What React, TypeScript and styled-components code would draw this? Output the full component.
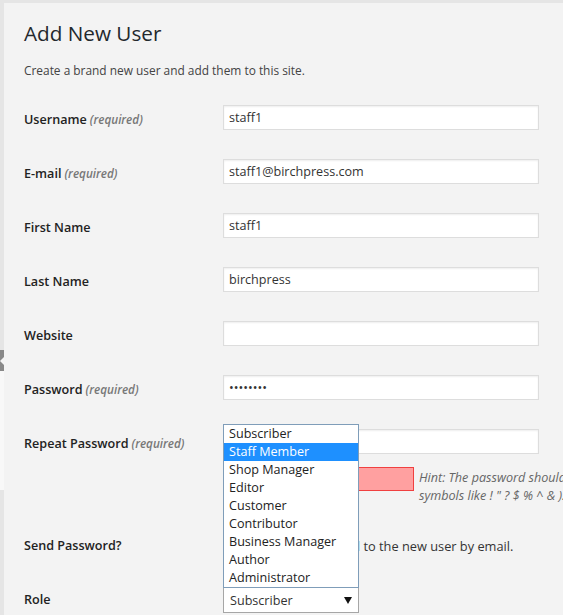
import React from "react";
import styled, { createGlobalStyle } from "styled-components";

const GlobalStyle = createGlobalStyle`
  html, body {
    margin: 0;
    padding: 0;
    overflow: hidden;
    background: #e5e5e5;
  }
  body {
    font-family: "Open Sans", "Liberation Sans", sans-serif;
    color: #222;
  }
  * {
    box-sizing: border-box;
  }
`;

const ROLES = [
  "Subscriber",
  "Staff Member",
  "Shop Manager",
  "Editor",
  "Customer",
  "Contributor",
  "Business Manager",
  "Author",
  "Administrator",
];

interface FieldRow {
  label: string;
  required?: boolean;
  value?: string;
  type?: string;
}

const ROWS: FieldRow[] = [
  { label: "Username", required: true, value: "staff1" },
  { label: "E-mail", required: true, value: "staff1@birchpress.com" },
  { label: "First Name", value: "staff1" },
  { label: "Last Name", value: "birchpress" },
  { label: "Website", value: "" },
  { label: "Password", required: true, value: "staff1pw", type: "password" },
];

interface LabelProps {
  text: string;
  required?: boolean;
  lowered?: boolean;
}

const Label = ({ text, required, lowered }: LabelProps) => (
  <RowLabel lowered={lowered}>
    {text}
    {required && <Required> (required)</Required>}
  </RowLabel>
);

export default function App() {
  return (
    <Page>
      <GlobalStyle />
      <Rail>
        <RailPart tone="gray" size={347} />
        <RailPart tone="dark" size={21} />
        <RailPart tone="light" size={119} />
        <RailPart tone="gray" />
      </Rail>
      <Content>
        <Title>Add New User</Title>
        <Intro>Create a brand new user and add them to this site.</Intro>
        <FormTable>
          {ROWS.map((row) => (
            <Row key={row.label}>
              <Label text={row.label} required={row.required} lowered />
              <Field>
                <TextInput
                  type={row.type || "text"}
                  defaultValue={row.value}
                  readOnly
                />
              </Field>
            </Row>
          ))}
          <Row>
            <Label text="Repeat Password" required lowered />
            <Field>
              <TextInput type="password" defaultValue="" readOnly />
              <StrengthLine>
                <Strength>Very weak</Strength>
                <Hint>
                  Hint: The password should be at least seven characters long. To
                  make it stronger, use upper and lower case letters, numbers, and
                  <br />
                  symbols like ! " ? $ % ^ &amp; ).
                </Hint>
              </StrengthLine>
            </Field>
          </Row>
          <Row>
            <Label text="Send Password?" />
            <Field>
              <CheckLine>
                <Check type="checkbox" />
                Send this password to the new user by email.
              </CheckLine>
            </Field>
          </Row>
          <Row>
            <Label text="Role" />
            <Field>
              <SelectBox>
                <span>Subscriber</span>
                <svg width="8" height="7" viewBox="0 0 8 7">
                  <path d="M0 0h8L4 7z" fill="#111" />
                </svg>
                <ListBox>
                  {ROLES.map((role) => (
                    <Option key={role} selected={role === "Staff Member"}>
                      {role}
                    </Option>
                  ))}
                </ListBox>
              </SelectBox>
            </Field>
          </Row>
        </FormTable>
      </Content>
    </Page>
  );
}

const Page = styled.div`
  display: grid;
  grid-template-columns: 4px 1fr;
  min-height: 100vh;
  padding-top: 3px;
  background: #e5e5e5;
`;

const Rail = styled.div`
  display: flex;
  flex-direction: column;
`;

interface RailPartProps {
  readonly tone: "gray" | "dark" | "light";
  readonly size?: number;
}

const RailPart = styled.div<RailPartProps>`
  position: relative;
  flex: ${(p) => (p.size ? `0 0 ${p.size}px` : "1 1 auto")};
  background: ${(p) =>
    p.tone === "dark" ? "#888" : p.tone === "light" ? "#f8f8f8" : "#e5e5e5"};

  ${(p) =>
    p.tone === "dark" &&
    `
    &::after {
      content: "";
      position: absolute;
      right: 0;
      top: 7px;
      border-top: 4px solid transparent;
      border-bottom: 4px solid transparent;
      border-right: 4px solid #f3f3f3;
    }
  `}
`;

const Content = styled.main`
  background: #f3f3f3;
  padding: 16px 0 0 20px;
  min-width: 0;
`;

const Title = styled.h1`
  margin: 0;
  font-size: 20.7px;
  line-height: 29px;
  font-weight: 400;
  color: #23282d;
`;

const Intro = styled.p`
  margin: 12px 0 0;
  font-size: 11.9px;
  line-height: 20px;
  color: #444;
`;

const FormTable = styled.div`
  margin-top: 10px;
  display: flex;
  flex-direction: column;
`;

const Row = styled.div`
  display: grid;
  grid-template-columns: 199px 1fr;
  align-items: start;
  padding: 15px 0 14px;
`;

interface RowLabelProps {
  readonly lowered?: boolean;
}

const RowLabel = styled.div<RowLabelProps>`
  height: 25px;
  padding-top: ${(p) => (p.lowered ? "2px" : "0")};
  font-size: 12.6px;
  line-height: 25px;
  font-weight: 600;
  color: #222;
`;

const Required = styled.span`
  font-size: 11.7px;
  line-height: 1;
  font-style: italic;
  color: #777;
`;

const Field = styled.div`
  position: relative;
  min-width: 0;
`;

const TextInput = styled.input`
  display: block;
  width: 316px;
  height: 25px;
  margin: 0;
  padding: 0 5px;
  border: 1px solid #ddd;
  box-shadow: inset 0 1px 2px rgba(0, 0, 0, 0.07);
  background: #fff;
  font-family: "Open Sans", "Liberation Sans", sans-serif;
  font-size: 12.6px;
  color: #333;
  outline: none;
`;

const StrengthLine = styled.div`
  display: flex;
  align-items: flex-start;
  height: 37px;
  margin-top: 13px;
`;

const Strength = styled.div`
  flex: 0 0 191px;
  height: 24px;
  border: 1px solid #f04040;
  background: #ffa0a0;
  font-size: 11.7px;
  line-height: 22px;
  text-align: center;
  color: #222;
`;

const Hint = styled.p`
  margin: 2px 0 0 5px;
  font-size: 12.6px;
  line-height: 18px;
  font-style: italic;
  color: #666;
  white-space: nowrap;
`;

const CheckLine = styled.label`
  display: flex;
  align-items: center;
  height: 25px;
  font-size: 12.8px;
  color: #333;
`;

const Check = styled.input`
  width: 14px;
  height: 14px;
  margin: 0 6px 0 1px;
`;

const SelectBox = styled.div`
  position: relative;
  display: flex;
  align-items: center;
  justify-content: space-between;
  width: 136px;
  height: 26px;
  padding: 0 6px 0 6px;
  border: 1px solid #a6a6a6;
  background: #fff;
  font-size: 12.6px;
  color: #333;
`;

const ListBox = styled.ul`
  position: absolute;
  left: -1px;
  bottom: 100%;
  width: 136px;
  margin: 0;
  padding: 0;
  list-style: none;
  border: 1px solid #7f9db9;
  background: #fff;
`;

interface OptionProps {
  readonly selected?: boolean;
}

const Option = styled.li<OptionProps>`
  height: 18px;
  padding: 0 5px;
  font-size: 12.6px;
  line-height: 18px;
  white-space: nowrap;
  color: ${(p) => (p.selected ? "#fff" : "#222")};
  background: ${(p) => (p.selected ? "#1e90ff" : "transparent")};
`;
